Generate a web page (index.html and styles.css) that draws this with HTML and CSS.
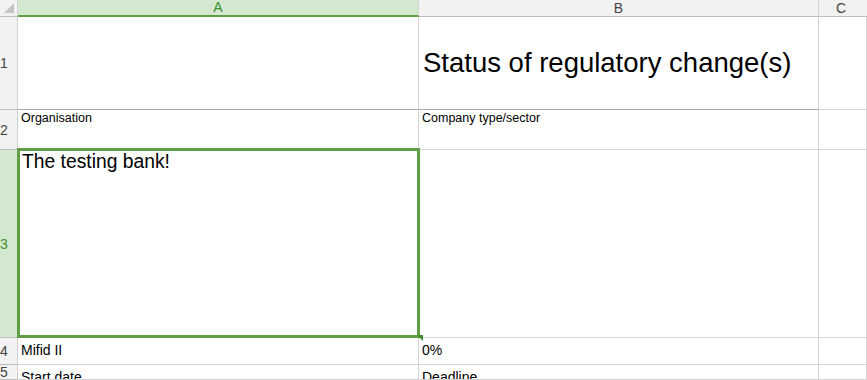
FILE: index.html
```html
<!DOCTYPE html>
<html>
<head>
<meta charset="utf-8">
<link rel="stylesheet" href="styles.css">
</head>
<body>
<div class="sheet">
  <div class="corner"><span class="tri"></span></div>
  <div class="colhead sel">A</div>
  <div class="colhead">B</div>
  <div class="colhead c">C</div>

  <div class="rowhead">1</div>
  <div class="cell"></div>
  <div class="cell title">Status of regulatory change(s)</div>
  <div class="cell"></div>

  <div class="rowhead">2</div>
  <div class="cell small">Organisation</div>
  <div class="cell small">Company type/sector</div>
  <div class="cell"></div>

  <div class="rowhead selrow">3</div>
  <div class="cell big">The testing bank!</div>
  <div class="cell"></div>
  <div class="cell"></div>

  <div class="rowhead">4</div>
  <div class="cell norm">Mifid II</div>
  <div class="cell norm">0%</div>
  <div class="cell"></div>

  <div class="rowhead">5</div>
  <div class="cell norm">Start date</div>
  <div class="cell norm">Deadline</div>
  <div class="cell"></div>

  <div class="selection"><span class="handle"></span></div>
</div>
</body>
</html>
```

FILE: styles.css
```css
html, body {
  margin: 0;
  padding: 0;
  background: #fff;
  overflow: hidden;
}
.sheet {
  position: relative;
  display: grid;
  grid-template-columns: 18px 401px 400px 1fr;
  grid-template-rows: 17px 93px 40px 188px 27px 15px;
  width: 867px;
  height: 380px;
  overflow: hidden;
  font-family: "Liberation Sans", Arial, sans-serif;
  color: #000;
}
.corner {
  position: relative;
  background: #f2f2f2;
  border-right: 1px solid #d0d0d0;
  border-bottom: 1px solid #bdbdbd;
}
.tri {
  position: absolute;
  right: 3px;
  bottom: 3px;
  width: 0;
  height: 0;
  border-left: 10px solid transparent;
  border-bottom: 10px solid #c4c4c4;
}
.colhead {
  background: #f2f2f2;
  border-right: 1px solid #d4d4d4;
  border-bottom: 1px solid #bdbdbd;
  font-size: 14px;
  line-height: 16px;
  color: #444;
  text-align: center;
}
.colhead.sel {
  background: #d3e8cf;
  color: #3d8f2c;
  border-bottom: 2px solid #5e9f45;
  line-height: 15px;
}
.colhead.c {
  text-align: left;
  padding-left: 17px;
  border-right: none;
}
.rowhead {
  background: #f2f2f2;
  border-right: 1px solid #d0d0d0;
  border-bottom: 1px solid #bdbdbd;
  font-size: 14px;
  color: #444;
  display: flex;
  align-items: center;
  padding-left: 0;
  overflow: hidden;
}
.rowhead.selrow {
  background: #d3e8cf;
  color: #3d8f2c;
}
.cell {
  border-right: 1px solid #d4d4d4;
  border-bottom: 1px solid #d4d4d4;
  overflow: hidden;
  white-space: nowrap;
}
.title {
  font-size: 27.5px;
  display: flex;
  align-items: center;
  padding-left: 4px;
  padding-bottom: 1px;
  border-bottom-color: #a8a8a8;
}
.sheet > .cell:nth-child(6) {
  border-bottom-color: #a8a8a8;
}
.small {
  font-size: 12.5px;
  padding: 1px 0 0 3px;
  line-height: 14px;
}
.big {
  font-size: 19.3px;
  padding: 1px 0 0 4px;
  line-height: 22px;
}
.norm {
  font-size: 14px;
  padding: 3px 0 0 3px;
  line-height: 18px;
}
.selection {
  position: absolute;
  left: 17px;
  top: 148px;
  width: 397px;
  height: 184px;
  border: 3px solid #5e9f45;
  pointer-events: none;
}
.handle {
  position: absolute;
  right: -6px;
  bottom: -6px;
  width: 0;
  height: 0;
  border-left: 6px solid transparent;
  border-top: 6px solid #3d8a2a;
}
```
